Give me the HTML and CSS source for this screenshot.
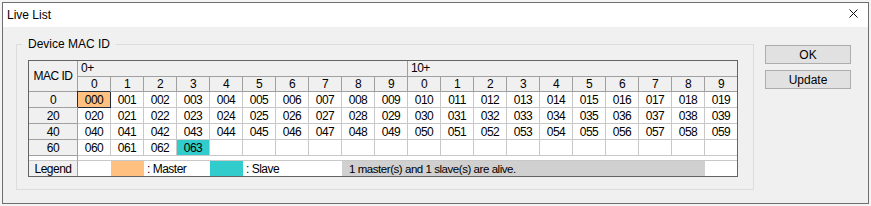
FILE: index.html
```html
<!DOCTYPE html>
<html lang="en">

<head>
  <meta charset="UTF-8">
  <title>Live List</title>
  <link rel="stylesheet" href="styles.css">
</head>

<body>
  <div class="window">
    <div class="titlebar">
      <span class="title">Live List</span>
      <svg class="close" width="9" height="9" viewBox="0 0 9 9">
        <path d="M0.5 0.5L8.5 8.5M8.5 0.5L0.5 8.5" stroke="#111" stroke-width="1" fill="none" />
      </svg>
    </div>

    <div class="dialog">
      <fieldset class="group">
        <legend>Device MAC ID</legend>
        <div class="grid" id="grid">
          <div class="hd corner">MAC ID</div>
          <div class="hd range">0+</div>
          <div class="hd range last">10+</div>

          <div class="sep-hd" id="sep"></div>
          <div class="sep last"></div>

          <div class="hd legend-label">Legend</div>
          <div class="lg"></div>
          <div class="lg master"></div>
          <div class="lg text span2">: Master</div>
          <div class="lg slave"></div>
          <div class="lg text span3">: Slave</div>
          <div class="lg msg">1 master(s) and 1 slave(s) are alive.</div>
          <div class="lg"></div>
        </div>
      </fieldset>

      <div class="actions">
        <button>OK</button>
        <button>Update</button>
      </div>
    </div>
  </div>

  <script>
    const grid = document.getElementById('grid');
    const sep = document.getElementById('sep');
    const masters = [0];
    const slaves = [63];
    const total = 64;

    function add(cls, text) {
      const el = document.createElement('div');
      el.className = cls;
      el.textContent = text;
      grid.insertBefore(el, sep);
    }

    // column numbers
    for (let c = 0; c < 20; c++) {
      add('hd num' + (c === 19 ? ' last' : ''), c % 10);
    }

    // rows of 20 ids
    for (let r = 0; r < 4; r++) {
      add('hd row', r * 20);
      for (let c = 0; c < 20; c++) {
        const id = r * 20 + c;
        let cls = 'cell';
        if (c === 19) cls += ' last';
        if (masters.includes(id)) cls += ' master';
        if (slaves.includes(id)) cls += ' slave';
        if (id === 0) cls += ' selected';
        add(cls, id < total ? String(id).padStart(3, '0') : '');
      }
    }
  </script>
</body>

</html>
```

FILE: styles.css
```css
* {
  margin: 0;
  padding: 0;
  box-sizing: border-box;
}

body {
  padding: 2px 0 0 2px;
  background: #f4f4f4;
  font-family: 'Liberation Sans', Arial, sans-serif;
  color: #000;
}

.window {
  width: 867px;
  height: 202px;
  border: 1px solid #6e6e6e;
  background: #f0f0f0;
}

.titlebar {
  height: 24px;
  background: #fff;
  display: flex;
  justify-content: space-between;
  align-items: center;
  padding: 0 10px 0 4px;
}

.title {
  font-size: 12px;
}

.close {
  align-self: flex-start;
  margin-top: 6px;
}

.dialog {
  display: flex;
  align-items: flex-start;
  padding: 10px 0 0 13px;
}

.group {
  border: 1px solid #dcdcdc;
  padding: 9px 15px 12px 11px;
  min-width: 0;
}

.group legend {
  font-size: 12px;
  line-height: 14px;
  padding: 0 6px;
  margin-left: -6px;
}

.grid {
  display: grid;
  grid-template-columns: 49px repeat(19, 33px) 32px;
  grid-template-rows: 16px 15px repeat(4, 16px) 5px 15px;
  border: 1px solid #646464;
  background: #fff;
  font-size: 12px;
  letter-spacing: -0.5px;
}

.grid > div {
  display: flex;
  align-items: center;
  justify-content: center;
  white-space: nowrap;
  overflow: hidden;
  border-right: 1px solid #c8c8c8;
  border-bottom: 1px solid #c8c8c8;
}

.grid > .last {
  border-right: none;
}

.hd {
  background: #f0f0f0;
  border-color: #a0a0a0 !important;
}

.corner {
  grid-row: span 2;
}

.range {
  grid-column: span 10;
  justify-content: flex-start !important;
  padding: 0 0 2px 3px;
}

.cell {
  background: #fff;
}

.master {
  background: #ffc080 !important;
}

.slave {
  background: #33cccc !important;
}

.grid > .selected {
  border-color: #1d2b3a;
  box-shadow: -1px -1px 0 #1d2b3a;
}

.sep-hd {
  background: #fff;
  border-right-color: #a0a0a0 !important;
}

.sep {
  grid-column: span 20;
  background: #fff;
}

.grid > .legend-label {
  border-bottom: none;
}

.grid > .lg {
  border: none;
  background: #fff;
}

.grid > .text {
  justify-content: flex-start;
  padding-left: 3px;
}

.span2 {
  grid-column: span 2;
}

.span3 {
  grid-column: span 3;
}

.grid > .msg {
  grid-column: span 11;
  justify-content: flex-start;
  padding-left: 7px;
  background: #d0d0d0;
  font-size: 11.5px;
  letter-spacing: -0.45px;
}

.actions {
  display: flex;
  flex-direction: column;
  gap: 6px;
  margin: 8px 0 0 11px;
}

.actions button {
  width: 86px;
  height: 19px;
  background: #e1e1e1;
  border: 1px solid #adadad;
  font-family: 'Liberation Sans', Arial, sans-serif;
  font-size: 12px;
  color: #000;
}
```
